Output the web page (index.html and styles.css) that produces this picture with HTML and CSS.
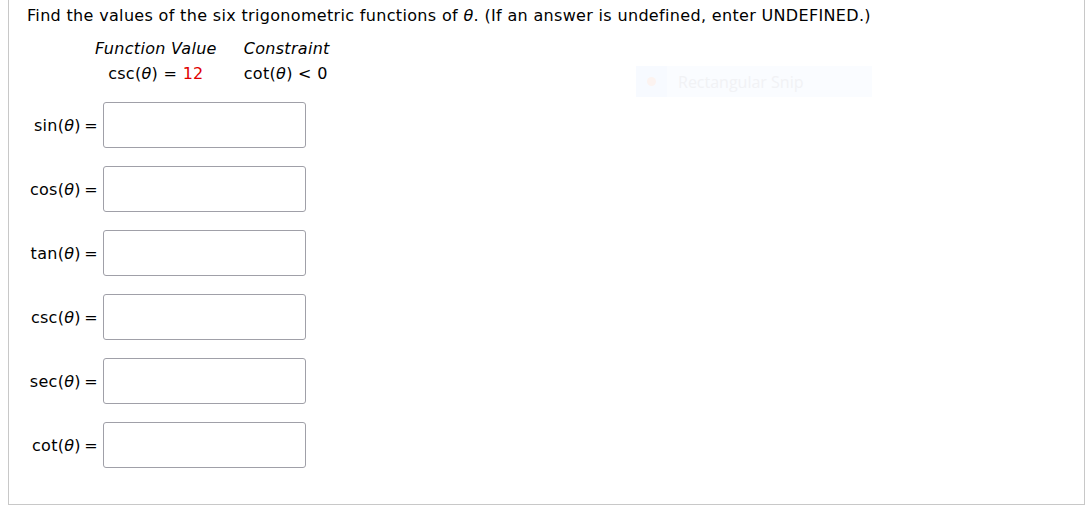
FILE: index.html
```html
<!DOCTYPE html>
<html lang="en">
<head>
  <meta charset="UTF-8">
  <title>Trigonometric Functions</title>
  <link rel="stylesheet" href="styles.css">
</head>
<body>
  <div class="question">
    <p class="prompt">Find the values of the six trigonometric functions of <i class="theta">θ</i>. (If an answer is undefined, enter UNDEFINED.)</p>

    <table class="given">
      <tr>
        <th>Function Value</th>
        <th>Constraint</th>
      </tr>
      <tr>
        <td>csc(<i class="theta">θ</i>) = <span class="red">12</span></td>
        <td>cot(<i class="theta">θ</i>) &lt; 0</td>
      </tr>
    </table>

    <div class="answers">
      <div class="answer-row">
        <label>sin(<i class="theta">θ</i>) =</label>
        <input type="text">
      </div>
      <div class="answer-row">
        <label>cos(<i class="theta">θ</i>) =</label>
        <input type="text">
      </div>
      <div class="answer-row">
        <label>tan(<i class="theta">θ</i>) =</label>
        <input type="text">
      </div>
      <div class="answer-row">
        <label>csc(<i class="theta">θ</i>) =</label>
        <input type="text">
      </div>
      <div class="answer-row">
        <label>sec(<i class="theta">θ</i>) =</label>
        <input type="text">
      </div>
      <div class="answer-row">
        <label>cot(<i class="theta">θ</i>) =</label>
        <input type="text">
      </div>
    </div>

    <div class="snip-ghost">
      <span class="snip-dot"></span>
      <span class="snip-text">Rectangular Snip</span>
    </div>
  </div>
</body>
</html>
```

FILE: styles.css
```css
* {
  box-sizing: border-box;
}

body {
  margin: 0;
  padding: 0 6px 6px 8px;
  background: #fff;
  font-family: "DejaVu Sans", Verdana, sans-serif;
  color: #000;
}

.question {
  position: relative;
  height: 505px;
  border: 1px solid #c8c8c8;
  border-top: none;
  padding: 6px 0 0 18px;
}

.prompt {
  margin: 0;
  font-size: 16px;
  letter-spacing: 0.33px;
  line-height: 20px;
}

.theta {
  font-style: italic;
}

.given {
  margin: 10px 0 0 68px;
  border-collapse: collapse;
  font-size: 16px;
  letter-spacing: 0.3px;
}

.given th {
  font-weight: normal;
  font-style: italic;
  padding: 0 27px 0 0;
  text-align: center;
  line-height: 25px;
}

.given td {
  padding: 0 27px 0 0;
  text-align: center;
  line-height: 25px;
}

.given td:last-child {
  text-align: left;
}

.red {
  color: #e00000;
}

.answers {
  display: flex;
  flex-direction: column;
  gap: 18px;
  margin-top: 16px;
}

.answer-row {
  display: flex;
  align-items: center;
}

.answer-row label {
  width: 76px;
  text-align: right;
  font-size: 16px;
  letter-spacing: 0.3px;
  word-spacing: -2px;
  padding-right: 5px;
}

.answer-row input {
  width: 203px;
  height: 46px;
  border: 1px solid #a0a0a8;
  border-radius: 3px;
  background: #fff;
}

.snip-ghost {
  position: absolute;
  left: 627px;
  top: 66px;
  width: 236px;
  height: 31px;
  background: #fafcff;
  display: flex;
  align-items: center;
}

.snip-dot {
  width: 31px;
  height: 31px;
  background: #f7faff;
  position: relative;
}

.snip-dot::after {
  content: "";
  position: absolute;
  left: 11px;
  top: 11px;
  width: 9px;
  height: 9px;
  border-radius: 50%;
  background: #fcf3f0;
}

.snip-text {
  margin-left: 11px;
  font-family: "Open Sans", sans-serif;
  font-size: 16px;
  color: #f1f2f5;
}
```
